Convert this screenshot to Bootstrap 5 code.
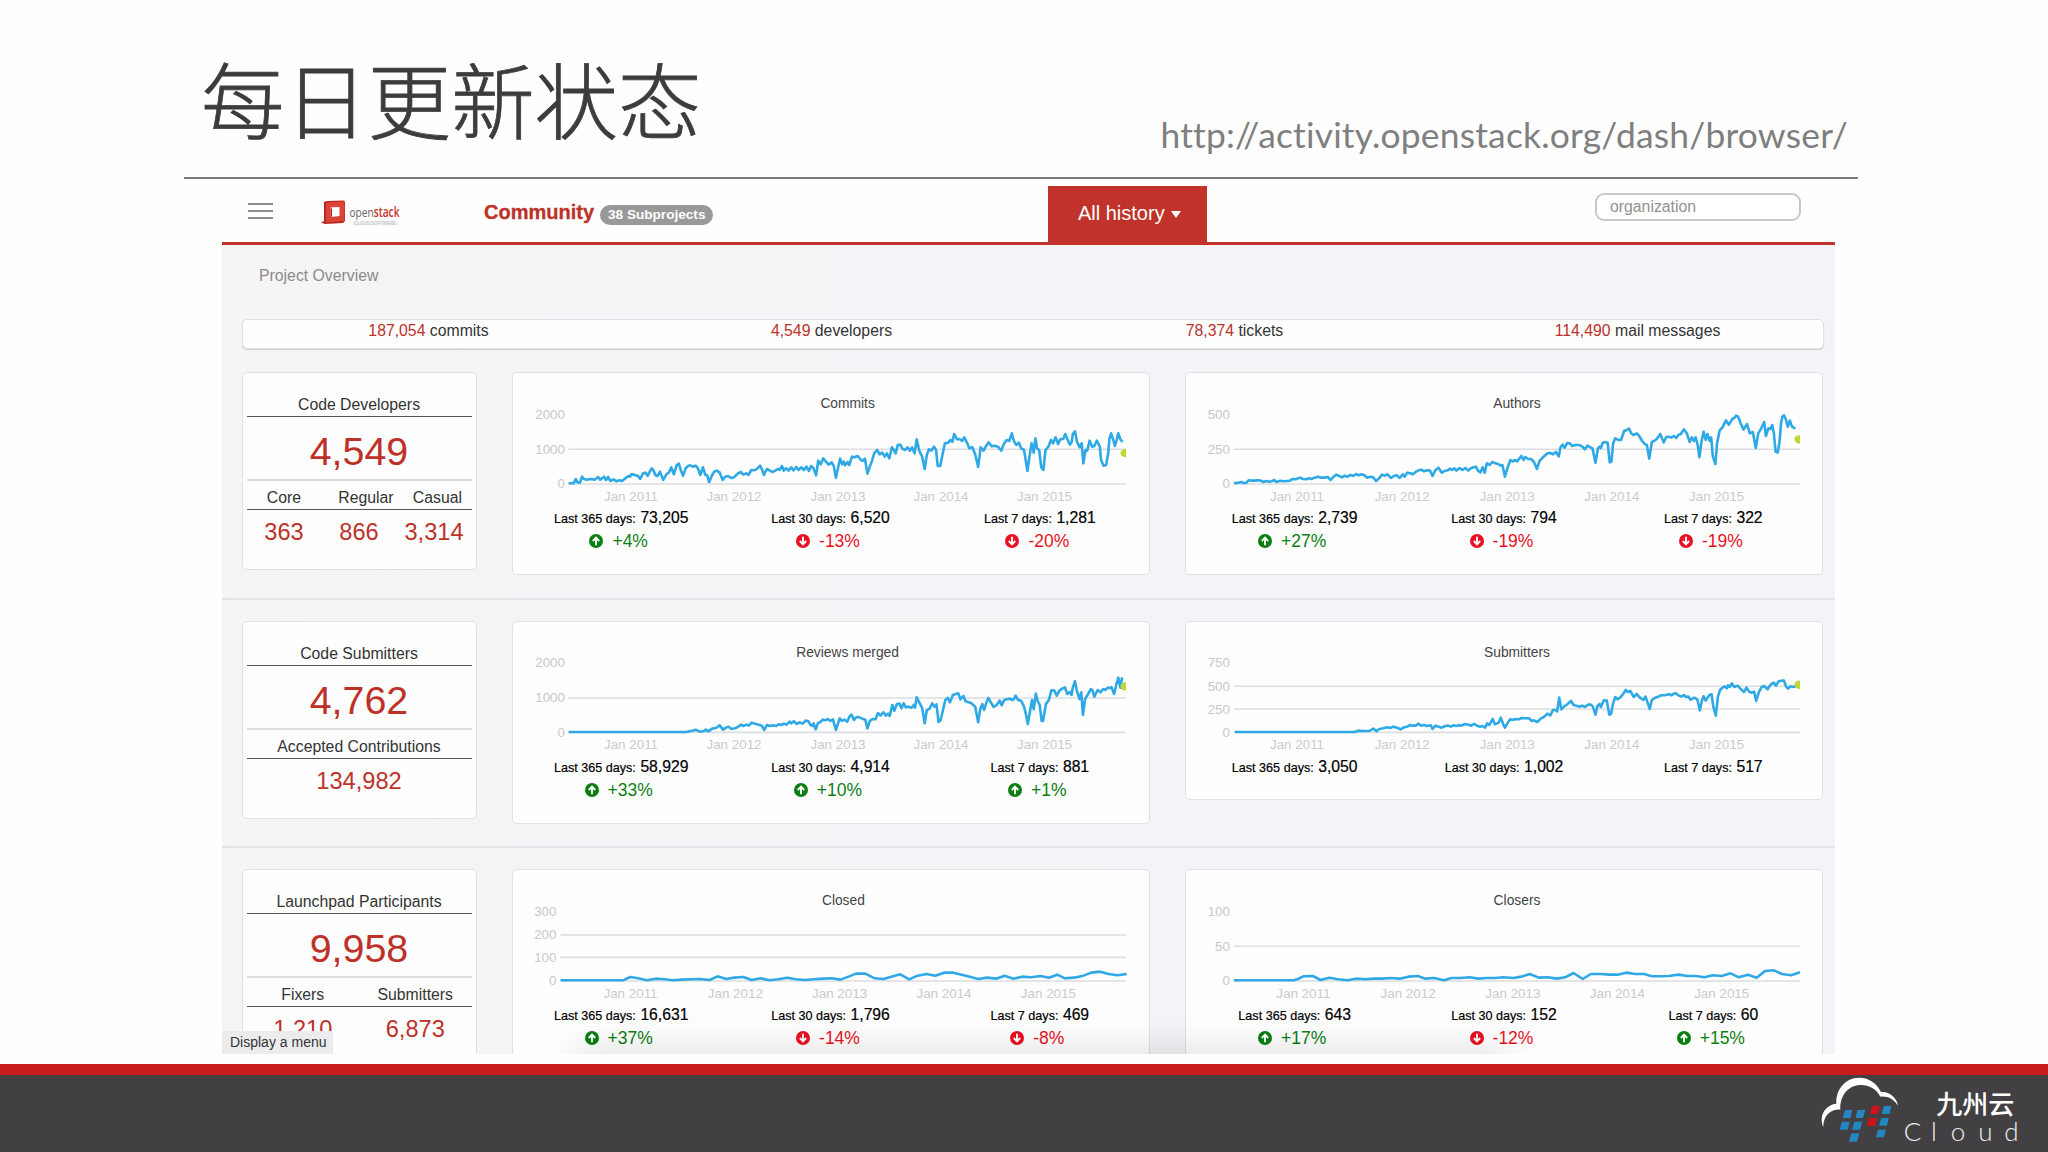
<!DOCTYPE html>
<html lang="zh-CN">
<head>
<meta charset="utf-8">
<meta name="viewport" content="width=device-width, initial-scale=1">
<title>每日更新状态</title>
<link href="https://cdn.jsdelivr.net/npm/bootstrap@5.3.0/dist/css/bootstrap.min.css" rel="stylesheet">
<style>
  body { width: 2048px; height: 1152px; overflow: hidden; background: #fefefe; font-family: "Liberation Sans", Arial, "Noto Sans CJK SC", sans-serif; font-size: 15.8px; line-height: 21px; color: #333; }
  .slide-head { height: 179px; margin: 0 190px 0 184px; padding: 0 10px 0 17px; border-bottom: 2px solid #7b7b7b; }
  .slide-title { font: 300 83.4px/120px "Noto Sans CJK SC", sans-serif; color: #3c3c3c; margin: 37px 0 0; -webkit-text-stroke: .8px #3c3c3c; }
  .slide-url { font: 400 35.4px/44px Lato, sans-serif; font-variant-ligatures: none; letter-spacing: .21px; color: #7f7f7f; margin-top: 113px; white-space: nowrap; }
  .dash { width: 1613px; height: 875px; margin-left: 222px; overflow: hidden; background: linear-gradient(90deg, #f5f5f5, #f4f3f6 30%, #f5f3f7); }
  .dash-nav { height: 66px; background: #fefefe; border-bottom: 3px solid #c1332a; }
  .burger { width: 25px; height: 16px; margin: 24px 0 0 26px; }
  .burger i { height: 2px; background: #8d8d8d; }
  .os-logo { margin: 18px 0 0 46px; overflow: visible; }
  .proj { font-size: 20px; font-weight: 700; color: #bd3129; line-height: 24px; margin: 21px 0 0 83px; -webkit-text-stroke: .3px #bd3129; }
  .sub-pill { font-size: 13.6px; line-height: 20px; height: 20px; background: #999; color: #fff; border-radius: 10px; padding: 0 8px; margin: 26px 0 0 6px; }
  .hist { width: 159px; height: 59px; margin: 7px 0 0; background: #c1332a; color: #fff; font-size: 20px; padding: 0 0 5px 29.5px; line-height: 24px; border: 0; border-radius: 0; text-align: left; }
  .hist::after { margin-left: 6px; vertical-align: 2px; border-top-width: 7px; border-left-width: 5.5px; border-right-width: 5.5px; }
  .org-box { width: 206px; height: 28px; border: 2px solid #c8c8c8; border-radius: 9px; padding: 0 13px; margin: 14px 0 0; font-size: 15.8px; background: #fff; }
  .org-box::placeholder { color: #919191; opacity: 1; }
  .overview { height: 74px; padding: 20px 0 0 37px; color: #8b8b8e; }
  .panel { background: #fefefe; border: 1px solid #e0dfe3; border-radius: 5px; }
  .totals { height: 30px; margin: 0 11px 0 20px; box-shadow: 0 1px 1px #ccc; }
  .totals .row { margin: 0 -16px; }
  .totals .col { line-height: 21px; padding: 0; }
  .red-n { color: #bd3129; }
  .dash-row { height: 248.7px; padding: 23px 11.5px 0 20px; }
  .dash-row + .dash-row { border-top: 2px solid #e3e2e6; padding-top: 21px; }
  .side { width: 235px; height: 198px; padding: 22px 4.5px 0 3.5px; margin-right: 35px; }
  .side .cap { height: 22px; line-height: 20px; border-bottom: 1.5px solid #555; }
  .side .big { height: 64px; font-size: 39.4px; line-height: 62px; padding-top: 3px; border-bottom: 2px solid #ddd; }
  .side .heads { height: 29px; padding-top: 6px; border-bottom: 1.5px solid #555; }
  .side .vals { font-size: 23.6px; line-height: 44px; }
  .plot { width: 638px; padding-bottom: 21px; }
  .plot + .plot { margin-left: 34.5px; }
  .plot svg.chart { display: block; width: 636px; height: 134px; font-size: 13.4px; }
  .chart .ttl { fill: #444; font-size: 13.8px; text-anchor: middle; }
  .chart .ys { fill: #c9c7cd; text-anchor: end; }
  .chart .xs { fill: #cbc9cf; text-anchor: middle; }
  .chart .grid { stroke: #dddce0; stroke-width: 1.6; fill: none; }
  .chart polyline { fill: none; stroke: #2fa9e6; stroke-width: 2.6; stroke-linejoin: round; vector-effect: non-scaling-stroke; }
  .chart .dot { fill: #bfd730; }
  .periods { margin: 0 4px; color: #000; }
  .plot + .plot .periods { margin: 0 3px 0 5px; }
  .periods .col { padding: 0 1px 0 0; }
  .lab { font-size: 12.6px; line-height: 22px; height: 22px; -webkit-text-stroke: .2px #000; }
  .lab b { font-size: 15.7px; font-weight: 400; margin-left: 1px; }
  .pct { font-size: 17.5px; line-height: 24px; height: 24px; padding-right: 5px; }
  .pct svg { width: 14px; height: 14px; margin-right: 9px; }
  .up { color: #0c7f12; }
  .down { color: #ea1022; }
  .status-tip { left: 0; bottom: 0; width: 111px; height: 23px; background: #ececee; font-size: 14px; line-height: 23px; padding-left: 8px; border-top-right-radius: 3px; }
  .dock-shade { left: 360px; top: 100%; width: 920px; height: 20px; box-shadow: 0 4px 40px 4px rgba(0,0,0,.17); }
  .slide-foot { height: 88px; margin-top: 10px; border-top: 11px solid #c81c1c; background: #434043; }
</style>
</head>
<body>
<svg width="0" height="0" class="position-absolute">
  <symbol id="i-up" viewBox="0 0 14 14"><circle cx="7" cy="7" r="7" fill="currentColor"/><path d="M7 11.2V4.2M3.8 7 7 3.7 10.2 7" fill="none" stroke="#fff" stroke-width="1.9"/></symbol>
  <symbol id="i-down" viewBox="0 0 14 14"><circle cx="7" cy="7" r="7" fill="currentColor"/><path d="M7 2.8v7M3.8 7 7 10.3 10.2 7" fill="none" stroke="#fff" stroke-width="1.9"/></symbol>
</svg>

<header class="slide-head d-flex justify-content-between align-items-start">
  <h1 class="slide-title">每日更新状态</h1>
  <div class="slide-url">http://activity.openstack.org/dash/browser/</div>
</header>

<main class="dash position-relative">
  <nav class="dash-nav d-flex align-items-start">
    <div class="burger d-flex flex-column justify-content-between"><i></i><i></i><i></i></div>
    <svg class="os-logo" width="82" height="32" viewBox="0 0 82 32">
      <path d="M5 5 8 4 25 3.500 26 5V24L24 26 6 27 2 25.500 5 24Z" fill="#b5271f"/>
      <path d="M7 5.500 25.500 4.500V24L7 25.500Z" fill="#dc4439"/>
      <path d="M11.500 10.500 20.500 10V19L11.500 20Z" fill="#fff"/><path d="M11.500 10.500 13 12V19.800L11.500 20Z" fill="#a92018"/>
      <text x="30.500" y="20" font-family="Open Sans, sans-serif" font-size="13.500" textLength="50" lengthAdjust="spacingAndGlyphs" fill="#666">open<tspan fill="#c8322a" font-weight="600">stack</tspan></text>
      <rect x="33" y="23.500" width="47" height="5" fill="#f1f3f4"/>
      <text x="35" y="28" font-size="4.500" textLength="42" lengthAdjust="spacingAndGlyphs" fill="#b9bdc0">CLOUD SOFTWARE</text>
    </svg>
    <div class="proj">Community</div>
    <span class="sub-pill fw-bold">38 Subprojects</span>
    <div class="flex-grow-1 d-flex justify-content-between" style="padding-left:335px;padding-right:34px">
      <button class="hist dropdown-toggle">All history</button>
      <input class="org-box" placeholder="organization">
    </div>
  </nav>

  <div class="overview">Project Overview</div>

  <div class="totals panel"><div class="row text-center">
    <div class="col"><span class="red-n">187,054</span> commits</div>
    <div class="col"><span class="red-n">4,549</span> developers</div>
    <div class="col"><span class="red-n">78,374</span> tickets</div>
    <div class="col"><span class="red-n">114,490</span> mail messages</div>
  </div></div>

  <section class="dash-row d-flex align-items-start">
    <div class="side panel text-center flex-shrink-0">
      <div class="cap">Code Developers</div>
      <div class="big red-n">4,549</div>
      <div class="heads row g-0"><span class="col-4">Core</span><span class="col-4" style="padding-left:14px">Regular</span><span class="col-4" style="padding-left:7px">Casual</span></div>
      <div class="vals row g-0 red-n"><span class="col">363</span><span class="col">866</span><span class="col">3,314</span></div>
    </div>
    <div class="plot panel flex-shrink-0">
      <svg class="chart" viewBox="0 0 636 134">
        <text class="ttl" x="334.600" y="35.300">Commits</text>
        <g class="ys"><text x="52" y="46">2000</text><text x="52" y="80.500">1000</text><text x="52" y="115">0</text></g>
        <path class="grid" d="M55.500 76.300H613M55.500 111H613"/>
        <g transform="translate(-13 -13) scale(.4209 .3333)"><polyline points="163,370 175,370 180,357 184,367 190,368 195,350 199,357 207,359 215,357 225,359 233,351 238,359 247,350 252,360 257,351 262,363 270,358 276,364 284,361 290,363 298,355 305,348 309,350 313,342 320,345 328,348 333,357 340,340 345,338 351,347 357,332 361,325 365,332 369,345 374,348 380,335 388,360 396,342 401,338 407,322 413,343 420,315 425,311 430,332 435,347 441,325 447,318 452,316 458,320 465,317 470,325 476,345 482,322 488,345 492,346 497,366 503,348 509,335 515,332 522,338 529,360 535,350 542,348 549,354 556,352 564,342 572,336 578,344 585,340 590,345 597,330 604,331 611,326 618,317 623,330 627,345 634,327 641,332 648,336 655,331 660,327 664,330 670,318 674,332 680,325 686,332 692,322 697,331 704,321 709,330 716,322 722,330 728,320 734,333 739,318 745,325 751,346 756,302 762,313 768,295 775,306 781,314 788,307 793,318 798,353 803,325 808,296 813,313 817,305 820,316 826,306 830,315 836,290 842,292 850,288 856,298 861,303 867,296 873,341 878,322 884,302 889,280 896,270 902,283 908,278 914,290 919,280 925,295 931,262 935,268 940,280 945,255 951,254 956,266 962,270 968,262 974,272 979,262 985,280 990,238 996,272 1003,290 1009,327 1014,285 1019,268 1025,272 1031,260 1036,270 1040,318 1046,318 1052,280 1057,250 1065,248 1070,240 1075,245 1079,222 1086,238 1092,237 1098,243 1103,232 1109,247 1115,265 1122,261 1129,283 1136,321 1142,262 1149,272 1155,258 1161,247 1168,259 1175,257 1183,260 1191,272 1197,252 1204,240 1210,243 1216,220 1221,243 1227,255 1233,248 1238,265 1245,270 1249,300 1253,333 1258,290 1263,250 1268,278 1272,235 1276,265 1281,270 1286,322 1291,330 1296,270 1303,260 1309,240 1314,250 1320,232 1326,252 1331,238 1338,237 1343,222 1349,240 1354,254 1358,247 1361,222 1366,214 1371,245 1377,262 1382,250 1386,310 1391,270 1395,272 1401,242 1407,260 1412,258 1418,242 1425,260 1428,300 1434,317 1440,315 1445,280 1448,235 1452,220 1457,240 1461,258 1465,240 1469,220 1474,238 1479,246"/></g>
        <path class="dot" d="M613 76Q607.500 76 607.500 80T613 84.200Z"/>
        <g class="xs"><text x="118" y="127.700">Jan 2011</text><text x="221" y="127.700">Jan 2012</text><text x="325" y="127.700">Jan 2013</text><text x="428" y="127.700">Jan 2014</text><text x="531.500" y="127.700">Jan 2015</text></g>
      </svg>
      <div class="periods row g-0 text-center">
        <div class="col"><div class="lab">Last 365 days: <b>73,205</b></div><div class="pct up d-flex align-items-center justify-content-center"><svg><use href="#i-up"/></svg>+4%</div></div>
        <div class="col"><div class="lab">Last 30 days: <b>6,520</b></div><div class="pct down d-flex align-items-center justify-content-center"><svg><use href="#i-down"/></svg>-13%</div></div>
        <div class="col"><div class="lab">Last 7 days: <b>1,281</b></div><div class="pct down d-flex align-items-center justify-content-center"><svg><use href="#i-down"/></svg>-20%</div></div>
      </div>
    </div>
    <div class="plot panel flex-shrink-0">
      <svg class="chart" viewBox="0 0 636 134">
        <text class="ttl" x="331" y="35.300">Authors</text>
        <g class="ys"><text x="44" y="46">500</text><text x="44" y="80.500">250</text><text x="44" y="115">0</text></g>
        <path class="grid" d="M48 76.300H614M48 111H614"/>
        <g transform="translate(-6 -13) scale(.4209 .3333)"><polyline points="128,370 140,368 146,366 150,369 157,369 163,361 170,362 177,362 185,361 192,362 198,366 205,363 212,365 218,364 224,360 229,366 238,362 244,364 252,363 260,363 268,357 275,358 285,353 292,357 300,358 307,355 312,357 320,353 328,350 335,353 343,353 351,351 358,360 365,350 371,344 378,348 385,352 391,347 398,350 405,345 412,348 418,342 424,346 431,343 438,346 444,353 452,350 459,352 466,363 473,355 480,344 486,347 493,343 501,354 508,348 515,346 522,354 529,343 534,350 540,338 547,340 553,343 560,336 567,331 573,329 580,334 587,331 594,332 600,348 607,330 614,323 622,338 629,333 636,331 642,326 647,330 652,325 657,332 664,324 671,330 678,324 685,332 691,325 697,322 703,320 708,332 714,337 719,322 724,338 729,310 736,315 742,306 749,310 756,312 762,317 766,315 772,350 779,320 785,300 790,304 796,300 801,304 811,288 816,300 820,291 827,297 834,297 841,306 848,327 854,303 860,295 866,288 873,280 880,279 886,283 893,276 900,289 904,262 909,254 914,263 920,249 926,250 932,258 940,255 948,255 956,260 962,268 968,257 975,262 980,265 987,308 993,265 997,260 1000,264 1004,249 1010,246 1016,248 1021,307 1025,305 1029,250 1034,235 1041,240 1048,240 1055,213 1061,210 1067,206 1072,220 1077,225 1085,220 1091,228 1098,243 1105,253 1109,254 1115,296 1121,246 1128,242 1134,235 1141,222 1149,247 1155,232 1161,230 1167,233 1173,228 1179,234 1184,225 1190,222 1197,208 1204,220 1211,246 1216,232 1221,243 1225,232 1230,255 1234,292 1239,245 1244,215 1249,240 1253,222 1258,242 1262,232 1266,290 1272,312 1276,250 1282,212 1290,200 1297,181 1304,194 1312,177 1317,174 1321,167 1326,170 1332,190 1339,209 1347,192 1354,220 1361,216 1368,264 1374,220 1381,205 1388,186 1392,228 1398,205 1403,207 1407,195 1411,220 1415,275 1420,278 1424,250 1428,190 1431,170 1435,166 1440,180 1444,200 1449,182 1454,200 1462,206"/></g>
        <path class="dot" d="M614 62.300Q608.500 62.300 608.500 66.300T614 70.700Z"/>
        <g class="xs"><text x="111" y="127.700">Jan 2011</text><text x="216.200" y="127.700">Jan 2012</text><text x="321.400" y="127.700">Jan 2013</text><text x="425.800" y="127.700">Jan 2014</text><text x="530.600" y="127.700">Jan 2015</text></g>
      </svg>
      <div class="periods row g-0 text-center">
        <div class="col"><div class="lab">Last 365 days: <b>2,739</b></div><div class="pct up d-flex align-items-center justify-content-center"><svg><use href="#i-up"/></svg>+27%</div></div>
        <div class="col"><div class="lab">Last 30 days: <b>794</b></div><div class="pct down d-flex align-items-center justify-content-center"><svg><use href="#i-down"/></svg>-19%</div></div>
        <div class="col"><div class="lab">Last 7 days: <b>322</b></div><div class="pct down d-flex align-items-center justify-content-center"><svg><use href="#i-down"/></svg>-19%</div></div>
      </div>
    </div>
  </section>

  <section class="dash-row d-flex align-items-start">
    <div class="side panel text-center flex-shrink-0">
      <div class="cap">Code Submitters</div>
      <div class="big red-n">4,762</div>
      <div class="heads">Accepted Contributions</div>
      <div class="vals red-n">134,982</div>
    </div>
    <div class="plot panel flex-shrink-0">
      <svg class="chart" viewBox="0 0 636 134">
        <text class="ttl" x="334.600" y="35.300">Reviews merged</text>
        <g class="ys"><text x="52" y="45.400">2000</text><text x="52" y="80">1000</text><text x="52" y="114.500">0</text></g>
        <path class="grid" d="M55.500 76H613M55.500 110.400H613"/>
        <g transform="translate(-13 -12) scale(.4209 .3333)"><polyline points="163,366 443,366 450,364 457,362 465,359 475,365 483,364 489,359 495,364 504,356 513,354 522,346 530,359 537,353 543,350 550,357 558,355 565,351 572,344 578,348 586,344 591,347 598,338 608,342 615,344 622,347 628,360 634,345 641,348 649,346 656,348 662,343 668,345 675,341 681,344 688,335 692,340 698,334 705,342 712,337 719,341 726,332 732,333 738,345 743,348 745,340 750,358 755,340 761,336 767,329 773,331 779,327 785,333 791,328 798,360 807,325 812,332 819,329 825,335 830,320 835,314 841,330 847,321 854,322 861,326 868,329 873,355 879,332 886,327 892,328 898,309 904,317 911,307 917,317 922,311 926,318 932,285 937,302 943,282 949,281 954,295 959,280 964,292 970,290 978,293 983,285 986,293 990,262 996,277 1003,294 1009,340 1014,300 1020,297 1027,280 1032,290 1037,283 1042,336 1047,330 1053,297 1058,270 1064,264 1069,277 1076,255 1083,252 1089,250 1094,268 1101,258 1106,274 1112,276 1120,280 1129,290 1136,337 1141,298 1146,282 1150,300 1155,280 1160,264 1167,279 1173,291 1180,285 1187,272 1192,286 1198,270 1206,267 1212,266 1216,270 1221,268 1225,257 1231,270 1238,272 1245,290 1250,315 1254,342 1259,305 1264,270 1268,298 1273,251 1278,275 1282,283 1287,333 1290,333 1297,283 1304,270 1310,241 1317,242 1323,257 1328,244 1334,237 1342,232 1348,252 1354,246 1358,255 1361,232 1366,214 1371,245 1377,267 1381,247 1385,315 1390,267 1396,255 1404,237 1408,242 1412,260 1420,240 1427,247 1433,237 1438,240 1444,233 1449,234 1453,232 1459,252 1464,225 1469,203 1474,233 1478,202"/></g>
        <path class="dot" d="M613 60.300Q607.500 60.500 607.500 64.500T613 68.700Z"/>
        <g class="xs"><text x="118" y="127">Jan 2011</text><text x="221" y="127">Jan 2012</text><text x="325" y="127">Jan 2013</text><text x="428" y="127">Jan 2014</text><text x="531.500" y="127">Jan 2015</text></g>
      </svg>
      <div class="periods row g-0 text-center">
        <div class="col"><div class="lab">Last 365 days: <b>58,929</b></div><div class="pct up d-flex align-items-center justify-content-center"><svg><use href="#i-up"/></svg>+33%</div></div>
        <div class="col"><div class="lab">Last 30 days: <b>4,914</b></div><div class="pct up d-flex align-items-center justify-content-center"><svg><use href="#i-up"/></svg>+10%</div></div>
        <div class="col"><div class="lab">Last 7 days: <b>881</b></div><div class="pct up d-flex align-items-center justify-content-center"><svg><use href="#i-up"/></svg>+1%</div></div>
      </div>
    </div>
    <div class="plot panel flex-shrink-0">
      <svg class="chart" viewBox="0 0 636 134">
        <text class="ttl" x="331" y="35.300">Submitters</text>
        <g class="ys"><text x="44" y="45.400">750</text><text x="44" y="68.500">500</text><text x="44" y="91.500">250</text><text x="44" y="114.500">0</text></g>
        <path class="grid" d="M48 64.300H614M48 87H614M48 110.400H614"/>
        <g transform="translate(-6 -12) scale(.4209 .3333)"><polyline points="130,366 415,366 424,362 433,363 450,363 460,356 467,364 474,357 483,355 493,352 500,354 507,350 516,353 524,358 532,352 540,350 547,345 553,347 560,347 567,341 573,347 580,345 587,348 596,346 600,357 607,347 615,350 622,353 630,348 637,347 643,350 650,346 656,348 663,346 669,347 677,342 685,344 692,347 699,342 706,347 713,350 719,348 725,353 730,340 735,345 743,327 748,343 757,338 762,323 768,343 772,353 779,338 784,328 790,330 797,327 805,328 811,324 820,325 829,325 836,333 841,331 849,336 857,326 862,323 868,317 873,311 880,316 886,300 892,300 896,304 901,263 906,298 912,290 918,285 923,280 929,273 935,285 942,287 949,290 956,287 962,291 969,284 976,284 981,290 987,314 992,287 997,282 1000,291 1007,271 1014,272 1020,314 1024,312 1029,280 1034,261 1040,268 1048,260 1054,250 1059,240 1064,246 1070,243 1078,261 1085,252 1092,262 1101,270 1106,260 1110,274 1116,297 1121,270 1129,263 1136,260 1144,256 1151,256 1158,254 1164,253 1168,256 1173,251 1178,250 1184,256 1191,260 1197,255 1202,261 1208,260 1213,269 1222,263 1229,268 1235,301 1240,272 1244,259 1249,272 1257,256 1263,253 1267,290 1273,317 1278,260 1283,240 1288,234 1294,229 1299,235 1302,226 1306,231 1311,220 1317,231 1325,227 1332,237 1340,246 1346,233 1352,245 1357,248 1364,245 1369,273 1375,247 1382,231 1388,228 1396,238 1404,223 1411,218 1416,227 1422,214 1430,212 1435,212 1440,230 1445,236 1450,229 1458,231 1464,228"/></g>
        <path class="dot" d="M614 58.500Q608.500 58.700 608.500 62.800T614 67Z"/>
        <g class="xs"><text x="111" y="127">Jan 2011</text><text x="216.200" y="127">Jan 2012</text><text x="321.400" y="127">Jan 2013</text><text x="425.800" y="127">Jan 2014</text><text x="530.600" y="127">Jan 2015</text></g>
      </svg>
      <div class="periods row g-0 text-center">
        <div class="col"><div class="lab">Last 365 days: <b>3,050</b></div></div>
        <div class="col"><div class="lab">Last 30 days: <b>1,002</b></div></div>
        <div class="col"><div class="lab">Last 7 days: <b>517</b></div></div>
      </div>
    </div>
  </section>

  <section class="dash-row d-flex align-items-start">
    <div class="side panel text-center flex-shrink-0">
      <div class="cap">Launchpad Participants</div>
      <div class="big red-n">9,958</div>
      <div class="heads row g-0"><span class="col">Fixers</span><span class="col">Submitters</span></div>
      <div class="vals row g-0 red-n"><span class="col">1,210</span><span class="col">6,873</span></div>
    </div>
    <div class="plot panel flex-shrink-0">
      <svg class="chart" viewBox="0 -1 636 134">
        <text class="ttl" x="330.400" y="34.300">Closed</text>
        <g class="ys"><text x="43.500" y="45">300</text><text x="43.500" y="68">200</text><text x="43.500" y="91">100</text><text x="43.500" y="114">0</text></g>
        <path class="grid" d="M47.600 64H613M47.600 86.400H613M47.600 110H613"/>
        <g transform="translate(-13 -11) scale(.4209 .3333)"><polyline points="144,361 292,361 310,351 328,355 350,361 370,356 390,358 412,361 432,359 455,358 475,357 498,360 517,349 537,357 556,353 578,351 598,360 619,355 640,361 661,358 682,353 703,358 725,360 746,358 767,356 788,355 809,359 828,350 846,341 868,341 890,355 911,357 930,350 951,343 972,358 992,347 1014,342 1034,347 1055,338 1077,338 1097,344 1116,350 1136,357 1157,353 1179,356 1199,347 1220,356 1240,350 1262,352 1284,348 1304,353 1324,344 1342,355 1364,353 1386,347 1405,338 1426,335 1446,342 1467,346 1489,342"/></g>
        <g class="xs"><text x="117.500" y="126.500">Jan 2011</text><text x="222.300" y="126.500">Jan 2012</text><text x="326.600" y="126.500">Jan 2013</text><text x="431" y="126.500">Jan 2014</text><text x="535.400" y="126.500">Jan 2015</text></g>
      </svg>
      <div class="periods row g-0 text-center">
        <div class="col"><div class="lab">Last 365 days: <b>16,631</b></div><div class="pct up d-flex align-items-center justify-content-center"><svg><use href="#i-up"/></svg>+37%</div></div>
        <div class="col"><div class="lab">Last 30 days: <b>1,796</b></div><div class="pct down d-flex align-items-center justify-content-center"><svg><use href="#i-down"/></svg>-14%</div></div>
        <div class="col"><div class="lab">Last 7 days: <b>469</b></div><div class="pct down d-flex align-items-center justify-content-center"><svg><use href="#i-down"/></svg>-8%</div></div>
      </div>
    </div>
    <div class="plot panel flex-shrink-0">
      <svg class="chart" viewBox="0 -1 636 134">
        <text class="ttl" x="331" y="34.300">Closers</text>
        <g class="ys"><text x="44" y="45">100</text><text x="44" y="79.500">50</text><text x="44" y="114">0</text></g>
        <path class="grid" d="M48 75.300H614M48 110H614"/>
        <g transform="translate(-6 -11) scale(.4209 .3333)"><polyline points="128,361 270,361 280,357 293,349 316,348 334,360 355,353 375,358 398,361 418,356 440,358 461,356 480,356 501,354 522,356 543,350 565,348 583,356 604,354 627,361 645,354 666,354 688,352 709,356 728,354 749,354 768,352 792,354 811,350 831,342 852,353 873,352 896,356 915,352 935,339 957,357 976,342 1000,342 1020,344 1040,344 1060,338 1082,342 1103,342 1121,349 1142,349 1162,348 1184,344 1205,348 1226,348 1246,352 1266,346 1287,348 1308,340 1328,352 1349,344 1370,353 1390,333 1411,331 1430,342 1452,346 1473,337"/></g>
        <g class="xs"><text x="117.300" y="126.500">Jan 2011</text><text x="222.100" y="126.500">Jan 2012</text><text x="326.900" y="126.500">Jan 2013</text><text x="431.300" y="126.500">Jan 2014</text><text x="535.700" y="126.500">Jan 2015</text></g>
      </svg>
      <div class="periods row g-0 text-center">
        <div class="col"><div class="lab">Last 365 days: <b>643</b></div><div class="pct up d-flex align-items-center justify-content-center"><svg><use href="#i-up"/></svg>+17%</div></div>
        <div class="col"><div class="lab">Last 30 days: <b>152</b></div><div class="pct down d-flex align-items-center justify-content-center"><svg><use href="#i-down"/></svg>-12%</div></div>
        <div class="col"><div class="lab">Last 7 days: <b>60</b></div><div class="pct up d-flex align-items-center justify-content-center"><svg><use href="#i-up"/></svg>+15%</div></div>
      </div>
    </div>
  </section>
  <div class="dock-shade position-absolute"></div>
  <div class="status-tip position-absolute">Display a menu</div>
</main>

<footer class="slide-foot d-flex justify-content-end">
  <svg width="268" height="77" viewBox="0 105 804 231">
    <path d="M130 261C115 225 138 194 169 191C167 148 196 113 237 113C269 113 292 132 303 156C328 154 350 172 354 197C341 178 325 168 301 170C289 147 268 135 243 135C206 135 179 165 181 209C151 207 130 228 130 261Z" fill="#fff"/>
    <g fill="#2587c2">
      <path d="M195 210h22l-6 24h-23zM232 210h24l-7 24h-22zM312 198h22l-5 24h-24zM186 245h23l-6 24h-24zM223 245h24l-7 24h-24zM304 234h22l-5 23h-24zM214 280h24l-7 25h-24zM294 269h24l-6 23h-24z"/>
    </g>
    <path d="M276 198h24l-6 24h-24zM267 234h24l-6 24h-24z" fill="#cf1218"/>
    <text x="469" y="222" font-family="Noto Sans CJK SC, sans-serif" font-size="78" font-weight="500" fill="#fff">九州云</text>
    <text x="371 453 512 595 673" y="304" font-family="Lato, sans-serif" font-weight="300" font-size="78" fill="#eee">Cloud</text>
  </svg>
</footer>
<script src="https://cdn.jsdelivr.net/npm/bootstrap@5.3.0/dist/js/bootstrap.bundle.min.js"></script>
</body>
</html>
